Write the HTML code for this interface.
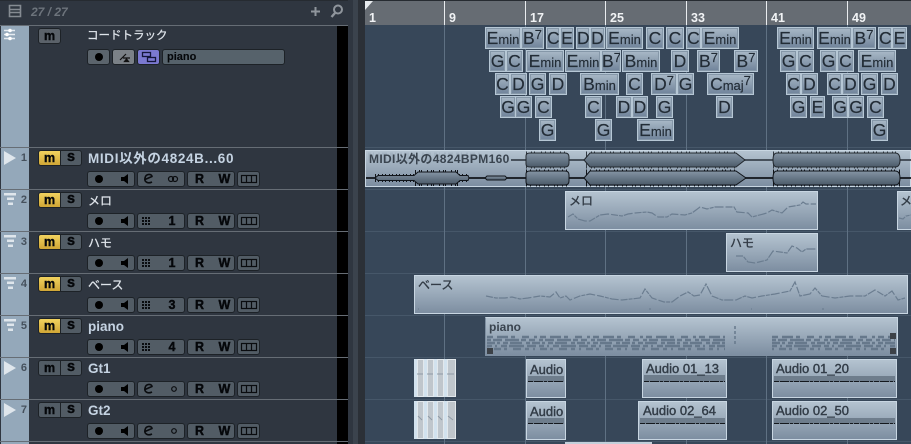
<!DOCTYPE html>
<html><head><meta charset="utf-8"><style>
html,body{margin:0;padding:0;background:#2f3640}
#p{position:relative;width:911px;height:444px;overflow:hidden;background:#2f3640;font-family:"Liberation Sans","Noto Sans CJK JP",sans-serif}
#p div{position:absolute;box-sizing:border-box}
#p svg{position:absolute;left:0;top:0}
.ln{left:0;width:348px;height:1px;background:#666d75}
.strip{left:1px;top:26px;width:28px;height:418px;background:#94a8ba}
.num{left:14px;width:13px;text-align:right;font-size:11px;font-weight:bold;color:#46515d;line-height:12px}
.b{height:16px;background:#525c65;border:1px solid #1d2227;border-radius:3px;color:#05070a;font-weight:bold;font-size:12.5px;line-height:14px;text-align:center;-webkit-text-stroke:.4px #05070a}
.s{font-size:14.5px;line-height:12px}
.y{background:linear-gradient(#f1d25e,#d0a636)}
.nm{left:88px;font-size:13.5px;font-weight:bold;color:#c5d3e2;line-height:16px;white-space:nowrap}
.jp{font-weight:normal;font-size:12px;color:#dfe4ea;-webkit-text-stroke:.25px #dfe4ea}
.c{height:22px;background:linear-gradient(#a9b9c7,#70839a);border:1px solid #b6c7d5;box-shadow:inset 0 0 0 1px #8597a8;color:#222c36;font-size:17.5px;line-height:21px;text-align:center;white-space:nowrap;overflow:hidden;-webkit-text-stroke:.15px #222c36}
.c span{font-size:13px}
.c sup{font-size:13px;line-height:0;vertical-align:5px}
.r1{top:27px}.r2{top:50px}.r3{top:73px}.r4{top:96px}.r5{top:119px}
.e{background:linear-gradient(#b4c3d0,#7d8ea1);border:1px solid #c8d6e2}
.et{color:#3a444f;font-weight:bold;font-size:12px;line-height:14px;white-space:nowrap}
.ej{color:#333c46;font-weight:normal;-webkit-text-stroke:.35px #333c46}
.a{color:#323c47;font-size:13px;line-height:15px;white-space:nowrap;-webkit-text-stroke:.4px #323c47}
.ru{color:#f1f3f5;font-weight:bold;font-size:12.5px;line-height:14px;top:11px}
.sl{top:0;height:38px;background:#bfc6cc;border:1px solid #e2e8ec}
</style></head><body><div id="p">

<!-- left panel -->
<div style="left:0;top:0;width:911px;height:1px;background:#262b31"></div>
<div style="left:337px;top:26px;width:11px;height:418px;background:#000"></div>
<div style="left:348px;top:0;width:5px;height:444px;background:#2f3640"></div>
<div style="left:353px;top:0;width:5px;height:444px;background:#3b434d"></div>
<div style="left:358px;top:0;width:7px;height:444px;background:#2b3037"></div>
<div class="strip"></div>
<div class="ln" style="top:25px"></div>
<div class="ln" style="top:147px"></div>
<div class="ln" style="top:189px"></div>
<div class="ln" style="top:231px"></div>
<div class="ln" style="top:273px"></div>
<div class="ln" style="top:315px"></div>
<div class="ln" style="top:357px"></div>
<div class="ln" style="top:399px"></div>
<div class="ln" style="top:441px"></div>
<div style="left:31px;top:4px;font-size:12px;font-weight:bold;font-style:italic;color:#6d747c;line-height:16px">27 / 27</div>

<!-- arrangement -->
<div style="left:365px;top:25px;width:546px;height:419px;background:#374759"></div>
<div style="left:365px;top:1px;width:546px;height:24px;background:#666c73"></div>
<div class="ru" style="left:369px">1</div>
<div class="ru" style="left:449px">9</div>
<div class="ru" style="left:530px">17</div>
<div class="ru" style="left:610px">25</div>
<div class="ru" style="left:691px">33</div>
<div class="ru" style="left:771px">41</div>
<div class="ru" style="left:852px">49</div>

<svg width="911" height="444" style="z-index:0">
<g stroke="#465769" stroke-width="1">
<path d="M365 147.5H911M365 189.5H911M365 231.5H911M365 273.5H911M365 315.5H911M365 357.5H911M365 399.5H911M365 441.5H911"/>
</g>
<g stroke="#e9ecef" stroke-width="1"><path d="M444.5 1V25M525.5 1V25M605.5 1V25M686.5 1V25M766.5 1V25M847.5 1V25"/></g>
<g stroke="#5f7183" stroke-width="1"><path d="M444.5 25V444M525.5 25V444M605.5 25V444M686.5 25V444M766.5 25V444M847.5 25V444"/></g>
<path d="M365 1H373L365 10Z" fill="#e8ecef"/>
<!-- header icons -->
<path d="M9.5 5.5H20.5V16.5H9.5ZM10 9.5H20M10 12.5H20" fill="none" stroke="#858b92" stroke-width="1.6"/>
<path d="M311 11.5H320M315.5 7V16" stroke="#8f959c" stroke-width="2"/>
<circle cx="338" cy="9.5" r="4" fill="none" stroke="#8f959c" stroke-width="2"/><path d="M335 13L331.5 17" stroke="#8f959c" stroke-width="2.4"/>
<!-- strip icons -->
<g stroke="#e6ebf0" stroke-width="1.6"><path d="M4 30.5H15M4 34.500H15M4 38.500H15"/></g>
<g fill="#fff"><circle cx="10" cy="30.500" r="1.800"/><circle cx="7" cy="34.500" r="1.800"/><circle cx="10" cy="38.500" r="1.800"/></g>
<g fill="#dfe6ec">
<path d="M4 151L16 158L4 165Z"/>
<path d="M4 361L16 368L4 375Z"/>
<path d="M4 403L16 410L4 417Z"/>
<path d="M4 193H16V195.500H4ZM7 197.500H14V200H7ZM8 202.500H13V205H8Z"/>
<path d="M4 235H16V237.500H4ZM7 239.500H14V242H7ZM8 244.500H13V247H8Z"/>
<path d="M4 277H16V279.500H4ZM7 281.500H14V284H7ZM8 286.500H13V289H8Z"/>
<path d="M4 319H16V321.500H4ZM7 323.500H14V326H7ZM8 328.500H13V331H8Z"/>
</g>
</svg>

<div class="num" style="top:152px">1</div>
<div class="num" style="top:194px">2</div>
<div class="num" style="top:236px">3</div>
<div class="num" style="top:278px">4</div>
<div class="num" style="top:320px">5</div>
<div class="num" style="top:362px">6</div>
<div class="num" style="top:404px">7</div>

<!-- chord track header -->
<div class="b" style="left:38px;top:28px;width:23px;background:#5b626a">m</div>
<div class="nm jp" style="left:87px;top:28px;font-size:11.500px">コードトラック</div>
<div class="b" style="left:87px;top:49px;width:23px;background:#5b646c"></div>
<div class="b" style="left:112px;top:49px;width:23px;background:#7b8187"></div>
<div class="b" style="left:137px;top:49px;width:23px;background:#7b79d0"></div>
<div class="b" style="left:162px;top:49px;width:123px;background:#56626b;text-align:left;padding-left:4px;font-size:11px;-webkit-text-stroke:.1px #05070a">piano</div>

<!-- track button rows -->
<div class="b y" style="left:38px;top:150px;width:23px;border-radius:3px 0 0 3px">m</div><div class="b s" style="left:60px;top:150px;width:22px;border-radius:0 3px 3px 0">s</div>
<div class="b y" style="left:38px;top:192px;width:23px;border-radius:3px 0 0 3px">m</div><div class="b s" style="left:60px;top:192px;width:22px;border-radius:0 3px 3px 0">s</div>
<div class="b y" style="left:38px;top:234px;width:23px;border-radius:3px 0 0 3px">m</div><div class="b s" style="left:60px;top:234px;width:22px;border-radius:0 3px 3px 0">s</div>
<div class="b y" style="left:38px;top:276px;width:23px;border-radius:3px 0 0 3px">m</div><div class="b s" style="left:60px;top:276px;width:22px;border-radius:0 3px 3px 0">s</div>
<div class="b y" style="left:38px;top:318px;width:23px;border-radius:3px 0 0 3px">m</div><div class="b s" style="left:60px;top:318px;width:22px;border-radius:0 3px 3px 0">s</div>
<div class="b" style="left:38px;top:360px;width:23px;border-radius:3px 0 0 3px">m</div><div class="b s" style="left:60px;top:360px;width:22px;border-radius:0 3px 3px 0">s</div>
<div class="b" style="left:38px;top:402px;width:23px;border-radius:3px 0 0 3px">m</div><div class="b s" style="left:60px;top:402px;width:22px;border-radius:0 3px 3px 0">s</div>

<div class="nm" style="top:151px;letter-spacing:.65px">MIDI以外の4824B...60</div>
<div class="nm jp" style="top:193px">メロ</div>
<div class="nm jp" style="top:235px">ハモ</div>
<div class="nm jp" style="top:277px">ベース</div>
<div class="nm" style="top:319px">piano</div>
<div class="nm" style="top:361px">Gt1</div>
<div class="nm" style="top:403px">Gt2</div>

<!-- control rows -->
<div class="b" style="left:87px;top:171px;width:48px"></div><div class="b" style="left:137px;top:171px;width:48px"></div><div class="b" style="left:187px;top:171px;width:48px;text-align:left;padding-left:7px;word-spacing:11px">R W</div><div class="b" style="left:237px;top:171px;width:23px"></div>
<div class="b" style="left:87px;top:213px;width:48px"></div><div class="b" style="left:137px;top:213px;width:48px;padding-left:22px">1</div><div class="b" style="left:187px;top:213px;width:48px;text-align:left;padding-left:7px;word-spacing:11px">R W</div><div class="b" style="left:237px;top:213px;width:23px"></div>
<div class="b" style="left:87px;top:255px;width:48px"></div><div class="b" style="left:137px;top:255px;width:48px;padding-left:22px">1</div><div class="b" style="left:187px;top:255px;width:48px;text-align:left;padding-left:7px;word-spacing:11px">R W</div><div class="b" style="left:237px;top:255px;width:23px"></div>
<div class="b" style="left:87px;top:297px;width:48px"></div><div class="b" style="left:137px;top:297px;width:48px;padding-left:22px">3</div><div class="b" style="left:187px;top:297px;width:48px;text-align:left;padding-left:7px;word-spacing:11px">R W</div><div class="b" style="left:237px;top:297px;width:23px"></div>
<div class="b" style="left:87px;top:339px;width:48px"></div><div class="b" style="left:137px;top:339px;width:48px;padding-left:22px">4</div><div class="b" style="left:187px;top:339px;width:48px;text-align:left;padding-left:7px;word-spacing:11px">R W</div><div class="b" style="left:237px;top:339px;width:23px"></div>
<div class="b" style="left:87px;top:381px;width:48px"></div><div class="b" style="left:137px;top:381px;width:48px"></div><div class="b" style="left:187px;top:381px;width:48px;text-align:left;padding-left:7px;word-spacing:11px">R W</div><div class="b" style="left:237px;top:381px;width:23px"></div>
<div class="b" style="left:87px;top:423px;width:48px"></div><div class="b" style="left:137px;top:423px;width:48px"></div><div class="b" style="left:187px;top:423px;width:48px;text-align:left;padding-left:7px;word-spacing:11px">R W</div><div class="b" style="left:237px;top:423px;width:23px"></div>

<svg width="360" height="444" style="z-index:2">
<defs>
<g id="ctl"><circle cx="99" cy="0" r="4" fill="#000"/><path d="M121 -2H124L128 -5V5L124 2H121Z" fill="#000"/><g fill="none" stroke="#0a0c0f" stroke-width="1.200"><rect x="241.500" y="-3.500" width="15" height="7"/><path d="M246.500 -3V3M251.500 -3V3"/></g></g>
<g id="gr" fill="#0a0c0f"><rect x="142" y="-4" width="2" height="2"/><rect x="145" y="-4" width="2" height="2"/><rect x="148" y="-4" width="2" height="2"/><rect x="142" y="-1" width="2" height="2"/><rect x="145" y="-1" width="2" height="2"/><rect x="148" y="-1" width="2" height="2"/><rect x="142" y="2" width="2" height="2"/><rect x="145" y="2" width="2" height="2"/><rect x="148" y="2" width="2" height="2"/></g>
<g id="ee"><path d="M145 0.500L152 -2.500C152 -5 146 -6 145 -1C144 3 148 5 152 3" fill="none" stroke="#0a0c0f" stroke-width="1.600"/></g>
</defs>
<use href="#ctl" y="179"/><use href="#ctl" y="221"/><use href="#ctl" y="263"/><use href="#ctl" y="305"/><use href="#ctl" y="347"/><use href="#ctl" y="389"/><use href="#ctl" y="431"/>
<use href="#gr" y="221"/><use href="#gr" y="263"/><use href="#gr" y="305"/><use href="#gr" y="347"/>
<use href="#ee" y="179"/><use href="#ee" y="389"/><use href="#ee" y="431"/>
<g fill="none" stroke="#0a0c0f" stroke-width="1.200"><circle cx="171" cy="179" r="2.500"/><circle cx="175" cy="179" r="2.500"/><circle cx="174" cy="389" r="2.300"/><circle cx="174" cy="431" r="2.300"/></g>
<!-- chord track icons -->
<circle cx="99" cy="57" r="4" fill="#000"/>
<path d="M120 60L126 54M123 58H130M126.500 59L128.500 61.500L124.500 61.500Z" stroke="#111" stroke-width="1.200" fill="#111"/>
<g fill="none" stroke="#14163a" stroke-width="1.300"><rect x="142.500" y="52.500" width="8" height="4"/><rect x="147.500" y="57.500" width="8" height="4"/></g>
</svg>

<!-- chords -->
<div class="c r1" style="left:485px;width:36px">E<span>min</span></div>
<div class="c r1" style="left:521px;width:23px">B<sup>7</sup></div>
<div class="c r1" style="left:546px;width:14px">C</div>
<div class="c r1" style="left:560px;width:14px">E</div>
<div class="c r1" style="left:576px;width:14px">D</div>
<div class="c r1" style="left:590px;width:15px">D</div>
<div class="c r1" style="left:606px;width:37px">E<span>min</span></div>
<div class="c r1" style="left:646px;width:18px">C</div>
<div class="c r1" style="left:666px;width:18px">C</div>
<div class="c r1" style="left:686px;width:15px">C</div>
<div class="c r1" style="left:701px;width:38px">E<span>min</span></div>
<div class="c r1" style="left:777px;width:37px">E<span>min</span></div>
<div class="c r1" style="left:817px;width:35px">E<span>min</span></div>
<div class="c r1" style="left:852px;width:24px">B<sup>7</sup></div>
<div class="c r1" style="left:878px;width:14px">C</div>
<div class="c r1" style="left:892px;width:15px">E</div>

<div class="c r2" style="left:489px;width:17px">G</div>
<div class="c r2" style="left:506px;width:17px">C</div>
<div class="c r2" style="left:526px;width:38px">E<span>min</span></div>
<div class="c r2" style="left:565px;width:36px">E<span>min</span></div>
<div class="c r2" style="left:601px;width:20px">B<sup>7</sup></div>
<div class="c r2" style="left:622px;width:38px">B<span>min</span></div>
<div class="c r2" style="left:671px;width:18px">D</div>
<div class="c r2" style="left:697px;width:23px">B<sup>7</sup></div>
<div class="c r2" style="left:734px;width:24px">B<sup>7</sup></div>
<div class="c r2" style="left:780px;width:17px">G</div>
<div class="c r2" style="left:797px;width:17px">C</div>
<div class="c r2" style="left:820px;width:17px">G</div>
<div class="c r2" style="left:837px;width:17px">C</div>
<div class="c r2" style="left:858px;width:38px">E<span>min</span></div>

<div class="c r3" style="left:495px;width:15px">C</div>
<div class="c r3" style="left:510px;width:17px">D</div>
<div class="c r3" style="left:529px;width:17px">G</div>
<div class="c r3" style="left:549px;width:18px">D</div>
<div class="c r3" style="left:580px;width:39px">B<span>min</span></div>
<div class="c r3" style="left:626px;width:17px">C</div>
<div class="c r3" style="left:651px;width:26px">D<sup>7</sup></div>
<div class="c r3" style="left:677px;width:17px">G</div>
<div class="c r3" style="left:707px;width:47px">C<span>maj</span><sup>7</sup></div>
<div class="c r3" style="left:786px;width:15px">C</div>
<div class="c r3" style="left:801px;width:17px">D</div>
<div class="c r3" style="left:827px;width:15px">C</div>
<div class="c r3" style="left:842px;width:17px">D</div>
<div class="c r3" style="left:861px;width:17px">G</div>
<div class="c r3" style="left:881px;width:17px">D</div>

<div class="c r4" style="left:500px;width:16px">G</div>
<div class="c r4" style="left:515px;width:17px">G</div>
<div class="c r4" style="left:535px;width:17px">C</div>
<div class="c r4" style="left:585px;width:17px">C</div>
<div class="c r4" style="left:616px;width:16px">D</div>
<div class="c r4" style="left:632px;width:16px">D</div>
<div class="c r4" style="left:656px;width:17px">G</div>
<div class="c r4" style="left:716px;width:17px">D</div>
<div class="c r4" style="left:790px;width:17px">G</div>
<div class="c r4" style="left:810px;width:15px">E</div>
<div class="c r4" style="left:832px;width:16px">G</div>
<div class="c r4" style="left:848px;width:16px">G</div>
<div class="c r4" style="left:867px;width:17px">C</div>

<div class="c r5" style="left:539px;width:17px">G</div>
<div class="c r5" style="left:595px;width:17px">G</div>
<div class="c r5" style="left:637px;width:37px">E<span>min</span></div>
<div class="c r5" style="left:871px;width:17px">G</div>

<!-- parts -->
<div class="e" style="left:365px;top:150px;width:546px;height:37px"></div>
<div class="e" style="left:565px;top:191px;width:253px;height:39px"></div>
<div class="e" style="left:897px;top:191px;width:14px;height:39px;border-right:0"></div>
<div class="e" style="left:726px;top:233px;width:92px;height:39px"></div>
<div class="e" style="left:414px;top:275px;width:494px;height:39px"></div>
<div class="e" style="left:485px;top:317px;width:413px;height:39px;border-left-color:#7e8fa1;border-bottom-color:#7e8fa1"></div>

<div class="e" style="left:526px;top:359px;width:40px;height:39px"></div>
<div class="e" style="left:526px;top:401px;width:40px;height:39px"></div>
<div class="e" style="left:642px;top:359px;width:85px;height:39px"></div>
<div class="e" style="left:638px;top:401px;width:89px;height:39px"></div>
<div class="e" style="left:772px;top:359px;width:125px;height:39px"></div>
<div class="e" style="left:772px;top:401px;width:125px;height:39px"></div>
<div style="left:565px;top:442px;width:87px;height:2px;background:#c3d0db"></div>

<div style="left:414px;top:359px;width:42px;height:38px;background:#d2e2ee">
<div class="sl" style="left:3px;width:7px"></div><div class="sl" style="left:13px;width:7px"></div><div class="sl" style="left:23px;width:7px"></div><div class="sl" style="left:33px;width:9px"></div></div>
<div style="left:414px;top:401px;width:42px;height:38px;background:#d2e2ee">
<div class="sl" style="left:3px;width:7px"></div><div class="sl" style="left:13px;width:7px"></div><div class="sl" style="left:23px;width:7px"></div><div class="sl" style="left:33px;width:9px"></div></div>

<svg width="911" height="444" style="z-index:3">
<defs><linearGradient id="w" x1="0" y1="0" x2="0" y2="1"><stop offset="0" stop-color="#8595a5"/><stop offset="1" stop-color="#4c5b6a"/></linearGradient></defs>
<!-- audio top channel faint -->
<path d="M368 157H480" stroke="#96a6b5" stroke-width="9" stroke-dasharray="3 2 1 4 2 2 5 3" opacity=".4"/>
<path d="M511 160H526M569 160H584M740 160H773M900 160H911" stroke="#3a434d" stroke-width="1.800"/>
<path d="M366 178H526M569 178H584M740 178H773M900 178H911" stroke="#11151a" stroke-width="1.800"/>
<!-- spikes -->
<path d="M526 160H569M586 160H738M773 160H900" stroke="#333b44" stroke-width="17" stroke-dasharray="1 4 1 2 1 6 1 3"/>
<path d="M526 178H569M586 178H738M773 178H900" stroke="#11151a" stroke-width="17" stroke-dasharray="1 3 1 5 1 2 1 4"/>
<path d="M375 178H469" stroke="#11151a" stroke-width="8" stroke-dasharray="1 2 1 3"/>
<path d="M415 178H460" stroke="#11151a" stroke-width="16" stroke-dasharray="1 3 1 1 1 5"/>
<g fill="url(#w)" stroke="#23292f" stroke-width="1">
<path d="M526 156Q526 153 530 153H565Q569 153 569 157V163Q569 167 565 167H530Q526 167 526 164Z"/>
<path d="M584 160L590 153H736L745 160L736 167H590Z"/>
<path d="M777 153H895Q900 153 900 160Q900 167 895 167H777Q773 167 773 160Q773 153 777 153Z"/>
</g>
<g fill="url(#w)" stroke="#10141a" stroke-width="1">
<path d="M526 174Q526 171 530 171H565Q569 171 569 175V181Q569 185 565 185H530Q526 185 526 182Z"/>
<path d="M584 178L590 171H736L746 178L736 185H590Z"/>
<path d="M777 171H895Q900 171 900 178Q900 185 895 185H777Q773 185 773 178Q773 171 777 171Z"/>
<path d="M375 178L378 175.500H414L418 172H456L460 175.500H468L469 178L468 180.500H460L456 184H418L414 180.500H378Z"/>
<path d="M485 178L487 176H505L507 178L505 180H487Z"/>
</g>
<!-- melo -->
<g fill="none" stroke="#6b7d90" stroke-width="1.200" stroke-dasharray="7 1 4 1 9 2">
<polyline points="568,217 573,214 578,219 585,221 590,221 595,218 600,215 608,214 615,215 622,216 628,214 635,213 647,212 652,213 658,217 667,217 672,214 685,215 692,213 700,207 707,209 715,207 734,207 737,212 748,213 752,217 767,213 772,210 782,213 788,207 800,205 803,202 806,204 816,204"/>
<polyline points="899,218 903,219 906,216 911,215"/>
<polyline points="736,256 743,256 748,262 755,263 767,260 773,251 787,253 792,246 797,248 802,252 806,249 816,249"/>
<!-- bass -->
<polyline points="486,296 496,298 505,298 512,297 520,299 528,298 540,296 550,297 556,292 560,298 566,296 570,300 580,296 590,294 600,296 612,299 622,300 640,298 645,289 652,298 664,302 672,302 680,296 688,292 694,296 700,295 706,284 712,296 722,300 736,300 745,296 752,298 762,296 775,294 790,291 795,282 800,296 810,294 815,288 822,296 835,298 850,296 865,296 875,290 885,296 892,291 898,300 905,298"/>
</g>
<path d="M418 309H905" stroke="#66788b" stroke-width="1" stroke-dasharray="1 230 2 100 1 70 2 300"/>
<!-- piano notes -->
<g stroke="#66788b" stroke-width="2.500" fill="none">
<path d="M487 337H725M772 337H895" stroke-dasharray="6 4 11 3 4 7 7 5 3 3"/>
<path d="M487 340H725M772 340H895" stroke-dasharray="4 2 9 3 14 2 5 3 6 4"/>
<path d="M487 343H725M772 343H895" stroke-dasharray="8 2 3 3 5 2 12 4 4 2"/>
<path d="M487 346H725M772 346H895" stroke-dasharray="5 3 2 4 6 2 15 3 9 3"/>
<path d="M487 349H725M772 349H895" stroke-dasharray="2 5 7 3 3 6 8 4 4 4"/>
<path d="M735 326V345" stroke-dasharray="3 2" stroke-width="1.500"/>
</g>
<g fill="#3c4147"><rect x="487" y="348" width="6" height="6"/><rect x="890" y="333" width="6" height="6"/><rect x="890" y="348" width="6" height="6"/></g>
<!-- audio small -->
<g fill="#6e7d8c">
<rect x="528" y="376" width="36" height="6"/><rect x="644" y="375" width="81" height="7"/><rect x="774" y="376" width="121" height="6"/>
<rect x="528" y="418" width="36" height="6"/><rect x="640" y="418" width="85" height="6"/><rect x="774" y="418" width="121" height="6"/>
</g>
<g stroke="#14181d" stroke-width="1" fill="none" stroke-dasharray="5 1 9 1 3 1">
<path d="M528 381.500H564M644 381.500H725M774 381.500H895M528 423.500H564M640 423.500H725M774 423.500H895"/>
</g>
<g stroke="#8f9ba6" stroke-width="1" fill="none"><path d="M417 374H423M427 374H433M437 374H443M447 374H454M418 416L422 420M428 416L432 420M438 416L442 420M448 416L453 420"/></g>
</svg>

<div class="et" style="left:369px;top:152px;z-index:4;letter-spacing:.35px">MIDI以外の4824BPM160</div>
<div class="et ej" style="left:569px;top:194px;z-index:4">メロ</div>
<div class="et ej" style="left:900px;top:194px;z-index:4">メ</div>
<div class="et ej" style="left:730px;top:236px;z-index:4">ハモ</div>
<div class="et ej" style="left:418px;top:278px;z-index:4">ベース</div>
<div class="et" style="left:489px;top:320px;z-index:4">piano</div>
<div class="a" style="left:530px;top:362px;z-index:4">Audio</div>
<div class="a" style="left:530px;top:404px;z-index:4">Audio</div>
<div class="a" style="left:646px;top:361px;z-index:4">Audio 01_13</div>
<div class="a" style="left:643px;top:403px;z-index:4">Audio 02_64</div>
<div class="a" style="left:776px;top:361px;z-index:4">Audio 01_20</div>
<div class="a" style="left:776px;top:403px;z-index:4">Audio 02_50</div>

</div></body></html>
